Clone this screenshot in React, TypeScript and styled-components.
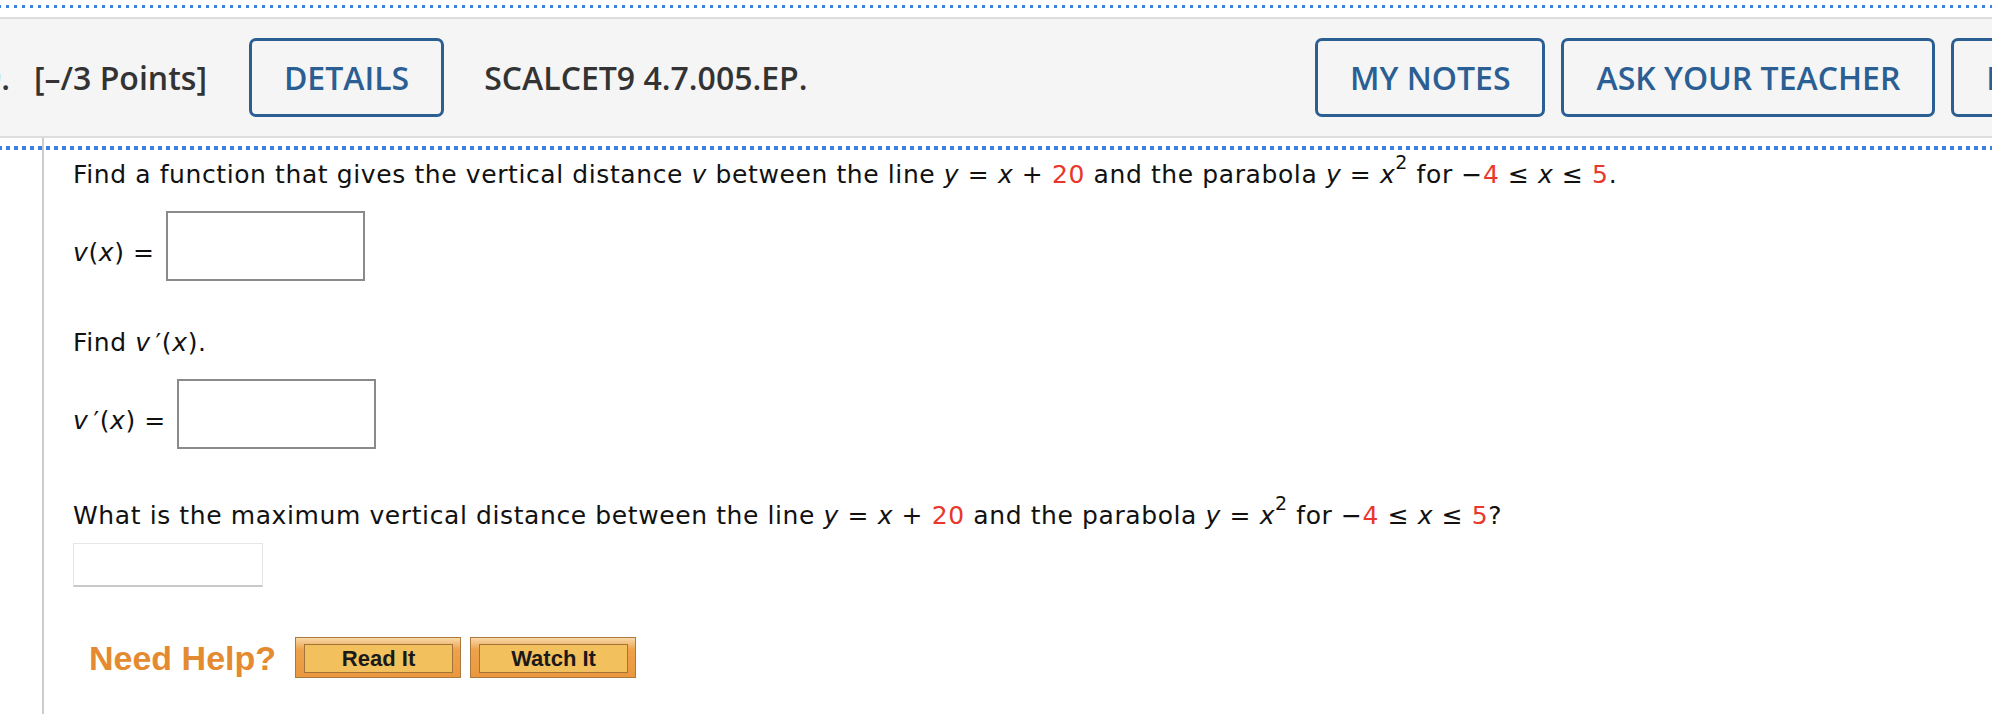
import styled, { createGlobalStyle } from "styled-components";

const GlobalStyle = createGlobalStyle`
  html, body {
    margin: 0;
    padding: 0;
    background: #fff;
    overflow: hidden;
  }
  body {
    font-family: "DejaVu Sans", Verdana, sans-serif;
  }
`;

function App() {
  return (
    <>
      <GlobalStyle />
      <Page>
        <DotRule $thick={3} />
        <Header>
          <Points>
            <QNumber>9.</QNumber>[–/3 Points]
          </Points>
          <OutlineButton>DETAILS</OutlineButton>
          <Title>SCALCET9 4.7.005.EP.</Title>
          <HeaderActions>
            <OutlineButton>MY NOTES</OutlineButton>
            <OutlineButton>ASK YOUR TEACHER</OutlineButton>
            <OutlineButton>PRACTICE ANOTHER</OutlineButton>
          </HeaderActions>
        </Header>

        <Panel>
          <PanelRule $thick={4} />
          <Question>
            <Line>
              Find a function that gives the vertical distance <Var>v</Var> between the line <Var>y</Var> = <Var>x</Var> +{" "}
              <Red>20</Red> and the parabola <Var>y</Var> = <Var>x</Var>
              <Sup>2</Sup> for −<Red>4</Red> ≤ <Var>x</Var> ≤ <Red>5</Red>.
            </Line>

            <AnswerRow>
              <Label>
                <Var>v</Var>(<Var>x</Var>) =
              </Label>
              <AnswerBox />
            </AnswerRow>

            <Line $top={45}>
              Find <Var>v</Var>
              <Prime>′</Prime>(<Var>x</Var>).
            </Line>

            <AnswerRow>
              <Label>
                <Var>v</Var>
                <Prime>′</Prime>(<Var>x</Var>) =
              </Label>
              <AnswerBox />
            </AnswerRow>

            <Line $top={50}>
              What is the maximum vertical distance between the line <Var>y</Var> = <Var>x</Var> + <Red>20</Red> and the
              parabola <Var>y</Var> = <Var>x</Var>
              <Sup>2</Sup> for −<Red>4</Red> ≤ <Var>x</Var> ≤ <Red>5</Red>?
            </Line>

            <PlainRow>
              <AnswerBox $plain />
            </PlainRow>

            <HelpRow>
              <NeedHelp>Need Help?</NeedHelp>
              <HelpButton>
                <HelpFace>Read It</HelpFace>
              </HelpButton>
              <HelpButton>
                <HelpFace>Watch It</HelpFace>
              </HelpButton>
            </HelpRow>
          </Question>
        </Panel>
      </Page>
    </>
  );
}

const Page = styled.div`
  width: 2400px;
  padding-top: 5px;
`;

const DotRule = styled.div<{ $thick: number }>`
  height: ${(p) => p.$thick}px;
  background-image: repeating-linear-gradient(
    90deg,
    #3d7fdc 0,
    #3d7fdc ${(p) => p.$thick}px,
    transparent ${(p) => p.$thick}px,
    transparent 8px
  );
  background-position: 6px 0;
`;

const Header = styled.header`
  margin-top: 9px;
  height: 117px;
  display: flex;
  align-items: center;
  gap: 42px;
  background: #f5f5f5;
  border-top: 2px solid #dddddd;
  border-bottom: 2px solid #dddddd;
  font-family: "Open Sans", sans-serif;
  font-weight: 600;
  font-size: 32px;
  color: #333333;
  white-space: nowrap;
`;

const Points = styled.span`
  margin-left: -17px;
`;

const QNumber = styled.span`
  margin-right: 24px;
`;

const Title = styled.span`
  margin-left: -2px;
`;

const HeaderActions = styled.div`
  margin-left: auto;
  margin-right: 71px;
  display: flex;
  gap: 16px;
`;

const OutlineButton = styled.button`
  box-sizing: border-box;
  height: 79px;
  padding: 0 32px;
  background: transparent;
  border: 3px solid #2b5f94;
  border-radius: 7px;
  color: #2b5f94;
  font: inherit;
  cursor: pointer;
`;

const Panel = styled.div`
  margin-left: 42px;
  min-height: 600px;
  border-left: 2px solid #cccccc;
  padding-top: 8px;
`;

const PanelRule = styled(DotRule)`
  margin-left: -44px;
  background-position: 6px 0;
`;

const Question = styled.div`
  padding: 8px 0 0 29px;
  font-size: 25px;
  letter-spacing: 0.6px;
  line-height: 34px;
  color: #111111;
`;

const Line = styled.p<{ $top?: number }>`
  margin: ${(p) => p.$top ?? 0}px 0 0;
  white-space: nowrap;
`;

const Var = styled.i`
  font-style: italic;
`;

const Red = styled.span`
  color: #e8372c;
`;

const Sup = styled.sup`
  font-size: 19px;
  line-height: 0;
  vertical-align: 14px;
`;

const Prime = styled.span`
  margin-left: 5px;
`;

const AnswerRow = styled.div`
  margin-top: 19px;
  display: flex;
  align-items: flex-end;
  gap: 11px;
`;

const Label = styled.span`
  padding-bottom: 11px;
`;

const AnswerBox = styled.input<{ $plain?: boolean }>`
  box-sizing: border-box;
  width: ${(p) => (p.$plain ? 190 : 199)}px;
  height: ${(p) => (p.$plain ? 44 : 70)}px;
  margin: 0;
  background: #fff;
  border: ${(p) => (p.$plain ? "1px solid #e6e6e6" : "2px solid #8a8a8a")};
  border-bottom: ${(p) => (p.$plain ? "2px solid #c9c9c9" : "2px solid #8a8a8a")};
  font: inherit;
`;

const PlainRow = styled.div`
  margin-top: 10px;
  display: flex;
`;

const HelpRow = styled.div`
  margin-top: 50px;
  padding-left: 16px;
  display: flex;
  align-items: center;
  gap: 9px;
  letter-spacing: 0;
`;

const NeedHelp = styled.span`
  margin-right: 10px;
  font-family: "Liberation Sans", Arial, sans-serif;
  font-weight: 700;
  font-size: 34px;
  color: #e48a30;
`;

const HelpButton = styled.button`
  box-sizing: border-box;
  width: 166px;
  height: 41px;
  padding: 6px 7px 4px 8px;
  border: 1px solid #ad783b;
  background: linear-gradient(#f7d9a9 0, #eea24b 30%, #ea983f 100%);
  cursor: pointer;
`;

const HelpFace = styled.span`
  box-sizing: border-box;
  display: flex;
  align-items: center;
  justify-content: center;
  height: 100%;
  border: 1px solid #a37439;
  background: #f2c05c;
  font-family: "Liberation Sans", Arial, sans-serif;
  font-weight: 700;
  font-size: 22px;
  color: #1a1a1a;
`;

export default App;
